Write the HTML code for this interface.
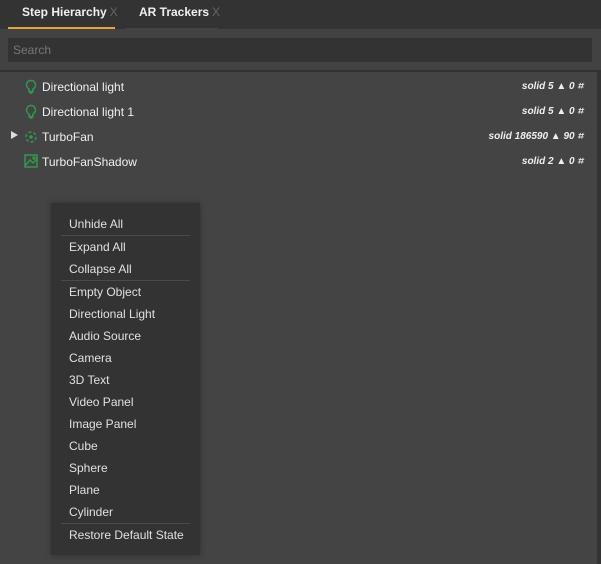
<!DOCTYPE html>
<html><head><meta charset="utf-8"><style>
*{margin:0;padding:0;box-sizing:border-box}
body{width:601px;height:564px;background:#444;font-family:"Liberation Sans",sans-serif;position:relative;overflow:hidden;color:#e6e6e6}
.abs{position:absolute}
.tabbar{left:0;top:0;width:601px;height:29px;background:#333}
.tab{top:5px;font-size:12px;font-weight:bold;color:#f0f0f0}
.x{color:#666;font-weight:normal;font-size:12px;margin-left:3px}
.mid{top:29px;left:0;width:601px;height:42px;background:#424242}
.search{left:8px;top:38px;width:584px;height:24px;background:#333;color:#777;font-size:12px;padding:5px 5px}
.sep{left:0;top:70px;width:601px;height:2px;background:#333}
.rb{left:597px;top:70px;width:4px;height:494px;background:#333}
.row{left:42px;font-size:12px;color:#f0f0f0}
.stat{right:18px;font-size:10px;font-style:italic;font-weight:bold;color:#eee;white-space:nowrap}
.menu{left:51px;top:203px;width:149px;height:352px;background:#333;box-shadow:0 0 6px rgba(0,0,0,.3)}
.mi{left:18px;font-size:12px;color:#e0e0e0}
.ml{left:10px;width:129px;height:1px;background:#4a4a4a}
</style></head><body>
<div class="abs tabbar"></div>
<div class="abs tab" style="left:22px">Step Hierarchy<span class="x">X</span></div>
<div class="abs" style="left:8px;top:27px;width:107px;height:2px;background:#e8a33a"></div>
<div class="abs tab" style="left:139px">AR Trackers<span class="x">X</span></div>
<div class="abs" style="left:125px;top:28px;width:93px;height:1px;background:#444"></div>
<div class="abs mid"></div>
<div class="abs search">Search</div>
<div class="abs sep"></div>
<div class="abs rb"></div>

<svg class="abs" style="left:24px;top:79px" width="14" height="90" viewBox="0 0 14 90" fill="none" stroke="#2e9a4e" stroke-width="1.5">
<path d="M5 10 C2.5 8.5 2 6 3 4 C4 2 5.5 1.5 7 1.5 C8.5 1.5 10 2 11 4 C12 6 11.5 8.5 9 10 L9 12.5 L5 12.5 Z M5.5 14 H8.5"/>
<path d="M5 35 C2.5 33.5 2 31 3 29 C4 27 5.5 26.5 7 26.5 C8.5 26.5 10 27 11 29 C12 31 11.5 33.5 9 35 L9 37.5 L5 37.5 Z M5.5 39 H8.5"/>
<circle cx="7" cy="58" r="5" stroke-dasharray="3 2.2"/>
<circle cx="7" cy="58" r="1" fill="#2e9a4e"/>
<rect x="1" y="76" width="12" height="12"/>
<path d="M1 87 L6 81 L9 84 L13 80"/>
<circle cx="10" cy="79" r="1"/>
</svg>
<div class="abs" style="left:11px;top:131px;width:0;height:0;border-top:4.5px solid transparent;border-bottom:4.5px solid transparent;border-left:7px solid #ddd"></div>

<div class="abs row" style="top:80px">Directional light</div>
<div class="abs row" style="top:105px">Directional light 1</div>
<div class="abs row" style="top:130px">TurboFan</div>
<div class="abs row" style="top:155px">TurboFanShadow</div>
<div class="abs stat" style="top:81px">solid 5 ▲ 0 ⌗</div>
<div class="abs stat" style="top:106px">solid 5 ▲ 0 ⌗</div>
<div class="abs stat" style="top:131px">solid 186590 ▲ 90 ⌗</div>
<div class="abs stat" style="top:156px">solid 2 ▲ 0 ⌗</div>

<div class="abs menu">
<div class="abs mi" style="top:14px">Unhide All</div>
<div class="abs ml" style="top:32px"></div>
<div class="abs mi" style="top:37px">Expand All</div>
<div class="abs mi" style="top:59px">Collapse All</div>
<div class="abs ml" style="top:77px"></div>
<div class="abs mi" style="top:82px">Empty Object</div>
<div class="abs mi" style="top:104px">Directional Light</div>
<div class="abs mi" style="top:126px">Audio Source</div>
<div class="abs mi" style="top:148px">Camera</div>
<div class="abs mi" style="top:170px">3D Text</div>
<div class="abs mi" style="top:192px">Video Panel</div>
<div class="abs mi" style="top:214px">Image Panel</div>
<div class="abs mi" style="top:236px">Cube</div>
<div class="abs mi" style="top:258px">Sphere</div>
<div class="abs mi" style="top:280px">Plane</div>
<div class="abs mi" style="top:302px">Cylinder</div>
<div class="abs ml" style="top:320px"></div>
<div class="abs mi" style="top:325px">Restore Default State</div>
</div>
</body></html>
